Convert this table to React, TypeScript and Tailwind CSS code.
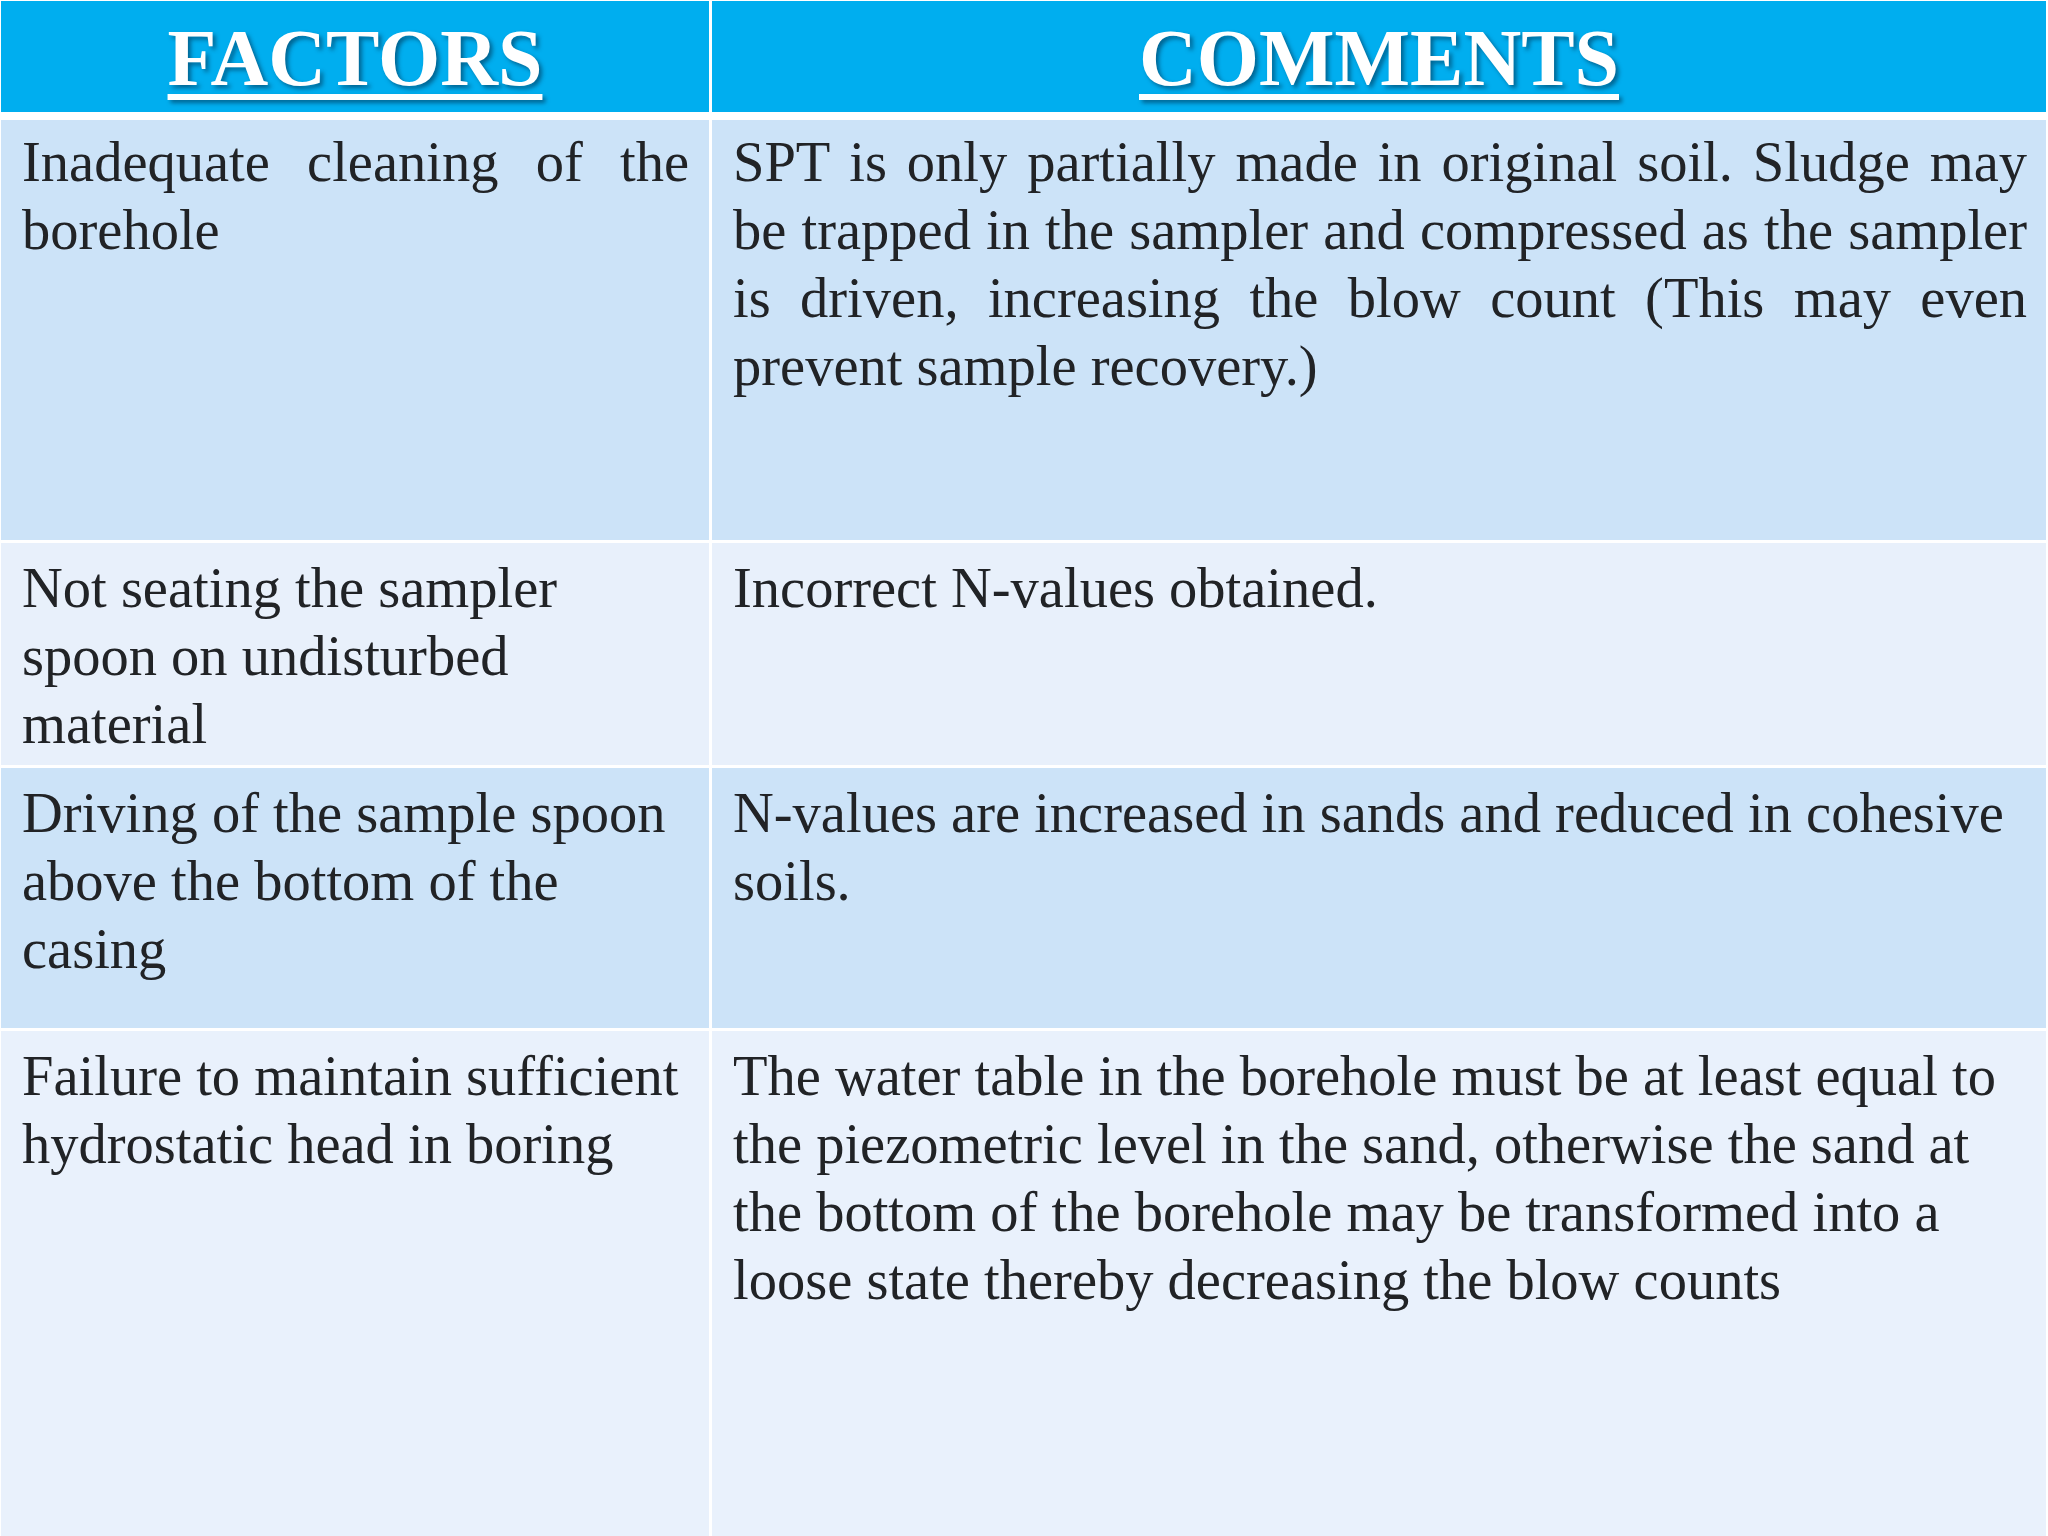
const rows = [
  {
    factor: "Inadequate cleaning of the borehole",
    comment:
      "SPT is only partially made in original soil. Sludge may be trapped in the sampler and compressed as the sampler is driven, increasing the blow count (This may even prevent sample recovery.)",
    height: "h-[420px]",
    bg: "bg-[#cce3f8]",
    pad: "pt-[8px]",
    justify: true,
  },
  {
    factor: "Not seating the sampler spoon on undisturbed material",
    comment: "Incorrect N-values obtained.",
    height: "h-[222px]",
    bg: "bg-[#e8f0fb]",
    pad: "pt-[11px]",
    justify: false,
  },
  {
    factor: "Driving of the sample spoon above the bottom of the casing",
    comment: "N-values are increased in sands and reduced in cohesive soils.",
    height: "h-[260px]",
    bg: "bg-[#cce3f8]",
    pad: "pt-[11px]",
    justify: false,
  },
  {
    factor: "Failure to maintain sufficient hydrostatic head in boring",
    comment:
      "The water table in the borehole must be at least equal to the piezometric level in the sand, otherwise the sand at the bottom of the borehole may be transformed into a loose state thereby decreasing the blow counts",
    height: "flex-1",
    bg: "bg-[#e9f1fc]",
    pad: "pt-[11px]",
    justify: false,
  },
];

export default function App() {
  return (
    <div
      className="w-[2048px] h-[1536px] overflow-hidden bg-white pt-px pl-px pr-[2px] flex flex-col"
      style={{ fontFamily: '"Liberation Serif", "Times New Roman", serif' }}
    >
      {/* Header */}
      <div className="h-[111px] grid grid-cols-[708px_1fr] gap-x-[3px] shrink-0">
        {["FACTORS", "COMMENTS"].map((title) => (
          <div key={title} className="bg-[#00aeef] flex justify-center pt-[17px]">
            <span className="text-white font-bold text-[80px] leading-none underline decoration-[6px] underline-offset-[9px] [text-shadow:3px_3px_4px_rgba(0,40,70,0.55)]">
              {title}
            </span>
          </div>
        ))}
      </div>

      {/* Rows */}
      <div className="flex-1 flex flex-col gap-y-[3px] pt-[8px] min-h-0">
        {rows.map((row, i) => (
          <div
            key={i}
            className={`${row.height} shrink-0 grid grid-cols-[708px_1fr] gap-x-[3px]`}
          >
            <div
              className={`${row.bg} ${row.pad} pl-[21px] pr-[20px] text-[56.5px] leading-[68px] text-[#212326] ${
                row.justify ? "text-justify" : ""
              }`}
            >
              {row.factor}
            </div>
            <div
              className={`${row.bg} ${row.pad} pl-[21px] pr-[19px] text-[56.5px] leading-[68px] text-[#212326] ${
                row.justify ? "text-justify" : ""
              }`}
            >
              {row.comment}
            </div>
          </div>
        ))}
      </div>
    </div>
  );
}
